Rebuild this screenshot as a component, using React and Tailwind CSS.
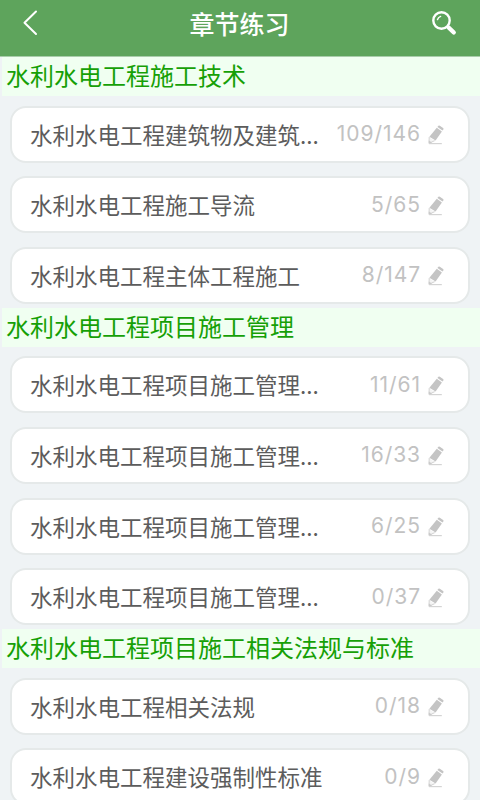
const sections = [
  {
    title: "水利水电工程施工技术",
    items: [
      { name: "水利水电工程建筑物及建筑...", done: 109, total: 146 },
      { name: "水利水电工程施工导流", done: 5, total: 65 },
      { name: "水利水电工程主体工程施工", done: 8, total: 147 },
    ],
  },
  {
    title: "水利水电工程项目施工管理",
    items: [
      { name: "水利水电工程项目施工管理...", done: 11, total: 61 },
      { name: "水利水电工程项目施工管理...", done: 16, total: 33 },
      { name: "水利水电工程项目施工管理...", done: 6, total: 25 },
      { name: "水利水电工程项目施工管理...", done: 0, total: 37 },
    ],
  },
  {
    title: "水利水电工程项目施工相关法规与标准",
    items: [
      { name: "水利水电工程相关法规", done: 0, total: 18 },
      { name: "水利水电工程建设强制性标准", done: 0, total: 9 },
    ],
  },
];

const BackIcon = () => (
  <svg width="16" height="26" viewBox="0 0 16 26" fill="none">
    <path
      d="M14 1.5 L2.5 12.8 L14 24"
      stroke="white"
      strokeWidth="2"
      strokeLinecap="round"
      strokeLinejoin="round"
    />
  </svg>
);

const SearchIcon = () => (
  <svg width="26" height="26" viewBox="0 0 26 26" fill="none" stroke="white" strokeLinecap="round">
    <circle cx="10.5" cy="10.5" r="8.2" strokeWidth="2.4" />
    <path d="M6.5 9.6 Q7.2 7.2 9.6 6.4" strokeWidth="1.5" />
    <path d="M17.6 17.4 L22.8 22.6" strokeWidth="4.2" />
  </svg>
);

const PencilIcon = () => (
  <svg width="17" height="20" viewBox="0 0 17 20" className="shrink-0">
    <path d="M9.4 2 L10.4 0.8 Q11 0.2 11.8 0.7 L15.1 3 Q15.9 3.6 15.4 4.4 L14.5 5.6 Z" fill="#c4c4c4" />
    <path d="M8.8 2.8 L13.9 6.4 L7.6 15.4 L1.4 11.7 Z" fill="#c4c4c4" />
    <path d="M1.2 12.2 L6.8 15.9 L1 18.3 Z" fill="#f4f4f4" />
    <path d="M1.2 12 L1 18.3 L6.8 15.6" fill="none" stroke="#cfcfcf" strokeWidth="0.9" />
    <path d="M0.8 15.6 L4 17.4 L0.8 18.8 Z" fill="#cacaca" />
    <path d="M1 18.6 H13.8" stroke="#d4d4d4" strokeWidth="1.2" />
  </svg>
);

const ChapterCard = ({ item }) => (
  <div className="flex h-[57px] items-center rounded-[16px] border-2 border-[#e5e9e9] bg-white pr-[23px] pl-[18px]">
    <span className="flex-1 pb-[1px] text-[22.5px] leading-[30px] whitespace-nowrap text-[#5c5c5c]">
      {item.name}
    </span>
    <span className="mr-[6.5px] font-['Inter','Liberation_Sans',sans-serif] text-[21px] leading-[30px] tracking-[0.95px] text-[#c2c2c2]">
      {item.done}/{item.total}
    </span>
    <div className="pt-[2px]">
      <PencilIcon />
    </div>
  </div>
);

const App = () => {
  return (
    <div className="h-[800px] w-[480px] overflow-hidden bg-[#eff3f5] font-['Noto_Sans_CJK_SC',sans-serif]">
      {/* Header */}
      <header className="flex h-[57px] items-center justify-between border-b border-[#a9cdab] bg-[#5ea45c] pr-[23px] pb-[10px] pl-[22px]">
        <div className="flex w-[26px]">
          <BackIcon />
        </div>
        <h1 className="pb-[1px] text-[25px] leading-[34px] font-medium text-white">章节练习</h1>
        <SearchIcon />
      </header>

      {/* Chapters */}
      {sections.map((section) => (
        <section key={section.title}>
          <h2 className="ml-[2px] h-[39px] bg-[#f0fff1] pl-[4px] text-[24px] leading-[36px] whitespace-nowrap text-[#16a006]">
            {section.title}
          </h2>
          <div className="flex flex-col gap-[13.6px] pt-[9.8px] pr-[10.5px] pb-[3.6px] pl-[10px]">
            {section.items.map((item, index) => (
              <ChapterCard key={index} item={item} />
            ))}
          </div>
        </section>
      ))}
    </div>
  );
};

export default App;
